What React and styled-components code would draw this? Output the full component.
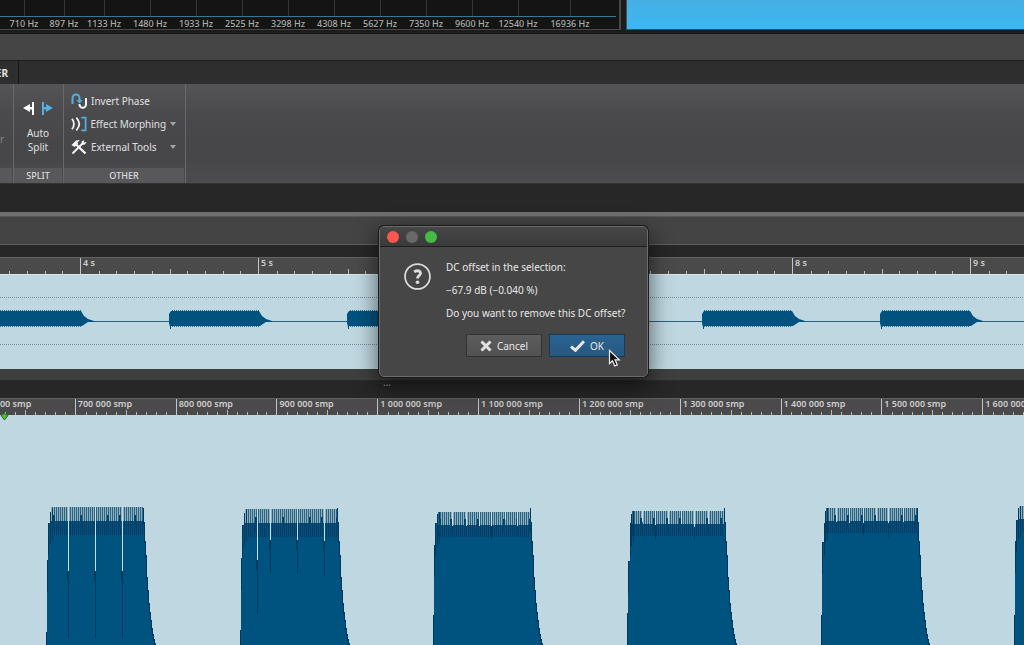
import React from "react";
import styled, { createGlobalStyle } from "styled-components";

const GlobalStyle = createGlobalStyle`
  *, *::before, *::after { box-sizing: border-box; }
  body { margin: 0; background: #272727; }
  button { font: inherit; color: inherit; border: 0; padding: 0; background: none; text-align: left; }
  svg { display: block; }
`;

const FONT = `"Noto Sans", "Open Sans", "Liberation Sans", sans-serif`;

const Page = styled.div`
  position: relative;
  display: flex;
  flex-direction: column;
  min-height: 100vh;
  overflow: hidden;
  background: #272727;
  color: #e0e0e0;
  font-family: ${FONT};
  font-size: 10px;
  line-height: 14px;
`;

/* ---------- meters ---------- */

const MeterRow = styled.div`
  display: flex;
  gap: 5px;
  height: 34px;
  padding-bottom: 3px;
  background: #1c1c1c;
  border-bottom: 1px solid #151515;
`;

const Spectrum = styled.section`
  flex: 0 0 621px;
  display: flex;
  gap: 3px;
  padding-left: 4px;
  background: linear-gradient(#3b7699, #3b7699) 0 16px / 616px 1px no-repeat #141414;
  border: solid #4b4848;
  border-width: 0 2px 1px 0;
`;

const BandGroup = styled.div`
  display: flex;
`;

const Band = styled.div`
  width: ${(p) => p.$width}px;
  display: flex;
  flex-direction: column;
  align-items: center;
  white-space: nowrap;
  color: #adadad;
  font-size: 9px;
  font-weight: 500;
  line-height: 14px;

  &::before {
    content: "";
    width: 1px;
    height: 16px;
    margin-bottom: 1px;
    flex: none;
    background: #363636;
  }
`;

const LevelMeter = styled.div`
  flex: 1;
  background: linear-gradient(#46afe4, #3cb8f2);
  border: solid #4b4b4b;
  border-width: 0 0 1px 1px;
`;

/* ---------- ribbon ---------- */

const Bar = styled.div`
  flex: none;
  height: ${(p) => p.$height}px;
  background: ${(p) => p.$color};
  border-bottom: ${(p) => (p.$edge ? `1px solid ${p.$edge}` : "0")};
`;

const TabBar = styled.nav`
  display: flex;
  height: 23px;
  background: #2e2e2e;
`;

const Tab = styled.button`
  width: 19px;
  display: flex;
  justify-content: flex-end;
  align-items: center;
  padding-right: 10px;
  overflow: hidden;
  border-right: 1px solid #161616;
  color: #e6e6e6;
  font-weight: 700;
`;

const Ribbon = styled.div`
  display: flex;
  height: 100px;
  background: linear-gradient(#555458, #4a4a4c 30%, #464648 70%, #4c4c4e);
  border-bottom: 1px solid #333;
`;

const Group = styled.section`
  width: ${(p) => p.$width}px;
  display: flex;
  flex-direction: column;
  padding-right: 1px;
  border-right: 1px solid #68686a;
`;

const GroupBody = styled.div`
  flex: 1;
  display: flex;
  flex-direction: column;
  padding-top: ${(p) => p.$top}px;
`;

const GroupTitle = styled.h2`
  height: 15px;
  margin: 0;
  background: #58585a;
  color: #dcdcdc;
  font-size: 9px;
  font-weight: 500;
  line-height: 15px;
  text-align: center;
`;

const DisabledLabel = styled.span`
  color: #828284;
`;

const SplitButton = styled.button`
  display: flex;
  flex-direction: column;
  align-items: center;
  gap: 10px;
  text-align: center;
`;

const ToolButton = styled.button`
  display: flex;
  align-items: center;
  gap: 4px;
  height: 23px;
  padding: 0 8px 0 7px;
  white-space: nowrap;

  span { flex: 1; }
`;

/* ---------- rulers and waveforms ---------- */

const Ruler = styled.div`
  flex: none;
  height: 17px;
  overflow: hidden;
  background: #4a4a4a;
  border-top: 1px solid #626262;
`;

const Track = styled.div`
  display: flex;
  width: ${(p) => p.$width}px;
  height: 16px;
  margin-left: ${(p) => p.$start}px;
`;

const Major = styled.div`
  flex: 1 1 0;
  display: grid;
  grid-template-rows: 11px 5px;
  border-left: 1px solid #c4c4c4;
`;

const MajorLabel = styled.span`
  padding-left: 2px;
  color: #cfcfcf;
  font-size: 9px;
  font-weight: 600;
  line-height: 10px;
  white-space: nowrap;
`;

const Minors = styled.div`
  display: flex;
  align-items: flex-end;
`;

const Minor = styled.i`
  flex: 1 1 0;
  height: ${(p) => p.$height}px;
  border-left: 1px solid ${(p) => (p.$height ? "#b9b9b9" : "transparent")};
`;

const Overview = styled.div`
  flex: none;
  height: 95px;
  background: #bfd7e0;
`;

const Detail = styled.div`
  position: relative;
  flex: 1 0 230px;
  background: #bfd7e0;

  > svg:first-child { position: absolute; inset: 0; }
`;

const Marker = styled.svg`
  position: absolute;
  left: 0;
  top: -4px;
`;

const Splitter = styled.div`
  flex: none;
  height: 17px;
  padding-left: 383px;
  background: #272727;
  color: #b0b0b0;
  line-height: 2px;
`;

/* ---------- dialog ---------- */

const Overlay = styled.div`
  position: absolute;
  inset: 0;
  display: flex;
  justify-content: center;
  align-items: flex-start;
  padding: 226px 0 0 3px;
`;

const Dialog = styled.div`
  position: relative;
  width: 269px;
  border: 1px solid #6b6b6b;
  border-radius: 5px;
  background: #464646;
  color: #e6e6e6;
  box-shadow: 0 0 0 1px #1b1b1b, 0 8px 22px 2px rgba(0, 0, 0, 0.55);
`;

const TitleBar = styled.div`
  display: flex;
  align-items: center;
  gap: 7px;
  height: 20px;
  padding-left: 7px;
  border-bottom: 1px solid #1e1e1e;
  border-radius: 4px 4px 0 0;
  background: linear-gradient(#474747, #3a3a3a);
`;

const Light = styled.button`
  width: 12px;
  height: 12px;
  border-radius: 50%;
  background: ${(p) => p.$color};
`;

const DialogBody = styled.div`
  display: flex;
  gap: 15px;
  padding: 9px 0 0 24px;

  > svg { margin-top: 7px; }
`;

const Message = styled.div`
  white-space: nowrap;

  p { margin: 0; line-height: 23px; }
`;

const Actions = styled.div`
  display: flex;
  justify-content: flex-end;
  gap: 7px;
  padding: 9px 22px 19px 0;
`;

const ActionButton = styled.button`
  display: flex;
  align-items: center;
  justify-content: center;
  gap: 5px;
  width: 76px;
  height: 23px;
  border: 1px solid ${(p) => (p.$primary ? "#15395f" : "#333")};
  background: ${(p) => (p.$primary ? "linear-gradient(#2a6391, #27587f)" : "linear-gradient(#5c5c5c, #525252)")};
`;

const Pointer = styled.svg`
  position: absolute;
  left: 228px;
  top: 122px;
`;

/* ---------- data ---------- */

const LOW_BANDS = ["710 Hz", "897 Hz", "1133 Hz"];
const HIGH_BANDS = ["1480 Hz", "1933 Hz", "2525 Hz", "3298 Hz", "4308 Hz", "5627 Hz", "7350 Hz", "9600 Hz", "12540 Hz"];

const SECONDS = ["", "4 s", "5 s", "", "", "8 s", "9 s", "", "", ""];
const SAMPLES = Array.from({ length: 16 }, (_, i) => {
  const n = i + 6;
  if (n > 16) return "";
  return n < 10 ? `${n}00 000 smp` : `${Math.floor(n / 10)} ${n % 10}00 000 smp`;
});

const BODY = "#00527f";
const DARK = "#003a5f";

const BURSTS = [
  { x: 46, left: [[0, 217], [1, 145], [2, 108], [4, 97], [6, 94]], end: 143, top: 92, mid: 106, low: 120,
    slits: [[68, 156, 223], [95, 156, 223], [122, 156, 223]], lumps: [53, 80, 107, 119, 134] },
  { x: 240, left: [[0, 215], [1, 143], [2, 110], [4, 98], [6, 94]], end: 337, top: 94, mid: 108, low: 122,
    slits: [[257, 145, 199], [270, 125, 158], [297, 125, 159], [324, 126, 161]], lumps: [255, 282, 309, 321, 336] },
  { x: 433, left: [[0, 200], [1, 130], [2, 108], [4, 99], [6, 97]], end: 530, top: 97, mid: 110, low: 122,
    slits: [[452, 111, 111], [466, 111, 111], [479, 111, 111], [491, 111, 124], [505, 105, 105], [517, 111, 111]], lumps: [439, 450, 464, 477, 503, 516, 529] },
  { x: 627, left: [[0, 198], [1, 146], [3, 108], [4, 99], [6, 96]], end: 724, top: 96, mid: 109, low: 121,
    slits: [[642, 107, 107], [655, 110, 125], [668, 109, 109], [681, 109, 109], [694, 112, 125], [708, 109, 109]], lumps: [640, 653, 666, 679, 706, 720] },
  { x: 821, left: [[0, 200], [1, 127], [3, 108], [4, 96], [6, 93]], end: 917, top: 93, mid: 106, low: 118,
    slits: [[836, 107, 107], [849, 108, 108], [863, 108, 120], [876, 106, 106], [888, 108, 122], [903, 107, 107]], lumps: [834, 847, 861, 874, 901, 915] },
  { x: 1014, left: [[0, 200], [1, 126], [2, 105], [4, 93], [6, 91]], end: 1111, top: 91, mid: 104, low: 116, slits: [], lumps: [] },
];

const DECAY = [[0, 107], [1, 126], [2, 140], [3, 162], [4, 175], [5, 188], [6, 197], [7, 205], [8, 213], [9, 219], [10, 224], [11, 228], [12, 232]];

function stepPath(points, baseX) {
  return points.map(([dx, y], i) => (i ? `H${baseX + dx}V${y}` : `V${y}`)).join("");
}

function Burst({ data }) {
  const { x, left, end, top, mid, low, slits, lumps } = data;
  const start = x + 6;
  const outline = `M${x} 1000${stepPath(left, x)}V${mid}H${end}${DECAY.map(([d, y]) => `H${end + d}V${y}`).join("")}H${end + 13}V1000Z`;
  const edge = `${DECAY.map(([d, y], i) => `M${end + d} ${y - (i ? y - DECAY[i - 1][1] : 14)}h1V${y + 2}h-1Z`).join("")}${left
    .map(([d, y]) => `M${x + d} ${y}h1v${d ? 32 : 60}h-1Z`)
    .join("")}`;
  return (
    <g shapeRendering="crispEdges">
      <path d={outline} fill={BODY} />
      <rect x={start - 1} y={top} width={end - start + 1} height={mid - top} fill="url(#teeth)" />
      <rect x={start - 2} y={mid} width={end - start + 2} height={low - mid} fill="url(#ridge)" />
      <path d={edge} fill={DARK} />
      {lumps.map((l) => (
        <rect key={l} x={l} y={mid - 6} width="2" height="14" fill="#00466f" />
      ))}
      {slits.map(([sx, lightEnd, darkEnd]) => (
        <g key={sx}>
          <rect x={sx} y={top} width="1" height={lightEnd - top} fill="#c9dce4" />
          <rect x={sx} y={lightEnd} width="1" height={darkEnd - lightEnd} fill={DARK} />
          {darkEnd - lightEnd > 20 && <rect x={sx - 1} y={lightEnd} width="1" height="10" fill={DARK} />}
        </g>
      ))}
    </g>
  );
}

function OverviewWave() {
  return (
    <svg width="100%" height="95" aria-hidden="true">
      <defs>
        <pattern id="dots" width="2" height="1" patternUnits="userSpaceOnUse">
          <rect width="1" height="1" fill="#718f9d" />
        </pattern>
        <pattern id="comb" width="2" height="1" patternUnits="userSpaceOnUse">
          <rect width="1" height="1" fill="#316f90" />
        </pattern>
      </defs>
      <rect width="100%" height="1" fill="#d6e6ec" />
      <rect y="23" width="100%" height="1" fill="url(#dots)" />
      <rect y="70" width="100%" height="1" fill="url(#dots)" />
      <rect y="47" width="100%" height="1" fill="#2d6280" />
      {[-9, 169, 347, 525, 702, 880].map((x) => (
        <g key={x}>
          <path d={`M${x} 40L${x + 2} 37H${x + 90}L${x + 93} 42L${x + 97} 45L${x + 103} 47V48L${x + 97} 48L${x + 91} 52H${x + 2}V55H${x + 1}V53L${x} 49Z`} fill={BODY} />
          <rect x={x + 2} y="36" width="88" height="1" fill="url(#comb)" />
          <rect x={x + 2} y="52" width="88" height="1" fill="url(#comb)" />
        </g>
      ))}
    </svg>
  );
}

function DetailWave() {
  return (
    <svg width="100%" height="100%" aria-hidden="true">
      <defs>
        <pattern id="teeth" width="2" height="1" patternUnits="userSpaceOnUse">
          <rect width="2" height="1" fill="#8fb0c1" />
          <rect width="1" height="1" fill="#2b6383" />
        </pattern>
        <pattern id="ridge" width="2" height="1" patternUnits="userSpaceOnUse">
          <rect width="2" height="1" fill={BODY} />
          <rect width="1" height="1" fill="#003e67" />
        </pattern>
      </defs>
      {BURSTS.map((b) => (
        <Burst key={b.x} data={b} />
      ))}
    </svg>
  );
}

function Scale({ labels, width, start }) {
  return (
    <Ruler>
      <Track $width={width} $start={start}>
        {labels.map((label, n) => (
          <Major key={n}>
            <MajorLabel>{label}</MajorLabel>
            <Minors>
              {[0, 3, 3, 3, 3, 5, 3, 3, 3, 3].map((h, i) => (
                <Minor key={i} $height={h} />
              ))}
            </Minors>
          </Major>
        ))}
      </Track>
    </Ruler>
  );
}

const Caret = () => (
  <svg width="6" height="4" aria-hidden="true">
    <path d="M0 0h6L3 4z" fill="#a5a5a7" />
  </svg>
);

export default function App() {
  return (
    <Page>
      <GlobalStyle />
      <MeterRow>
        <Spectrum aria-label="Spectrum">
          <BandGroup>
            {LOW_BANDS.map((b) => (
              <Band key={b} $width={40}>{b}</Band>
            ))}
          </BandGroup>
          <BandGroup>
            {HIGH_BANDS.map((b) => (
              <Band key={b} $width={46}>{b}</Band>
            ))}
            <Band $width={58}>16936 Hz</Band>
          </BandGroup>
        </Spectrum>
        <LevelMeter />
      </MeterRow>

      <Bar $height={27} $color="#454545" $edge="#1c1c1c" />
      <TabBar>
        <Tab>ER</Tab>
      </TabBar>
      <Ribbon>
        <Group $width={14}>
          <GroupBody $top={48}>
            <DisabledLabel>r</DisabledLabel>
          </GroupBody>
          <GroupTitle />
        </Group>
        <Group $width={50}>
          <GroupBody $top={16}>
            <SplitButton>
              <svg width="32" height="16" viewBox="0 0 32 16" aria-hidden="true">
                <path d="M1 8l7-4v3h2V2h2v13h-2V9.500H8V12z" fill="#fff" />
                <path d="M31 8l-7-4v3h-2V2h-2v13h2V9.500h2V12z" fill="#55aee0" />
              </svg>
              <span>Auto<br />Split</span>
            </SplitButton>
          </GroupBody>
          <GroupTitle>SPLIT</GroupTitle>
        </Group>
        <Group $width={122}>
          <GroupBody $top={5}>
            <ToolButton>
              <svg width="16" height="16" viewBox="0 0 16 16" fill="none" strokeWidth="2" aria-hidden="true">
                <path d="M1.500 11V5a3.500 3.500 0 0 1 7 0v2" stroke="#55aee0" />
                <path d="M5.500 7h6L8.500 10.500z" fill="#55aee0" />
                <path d="M8.500 11v0.500a3.200 3.200 0 0 0 6.500 0V5" stroke="#f4f4f4" />
              </svg>
              <span>Invert Phase</span>
            </ToolButton>
            <ToolButton>
              <svg width="16" height="16" viewBox="0 0 16 16" fill="none" strokeWidth="1.800" aria-hidden="true">
                <path d="M1 2.500q4 5.500 0 11M5.500 1.500q6 6.500 0 13" stroke="#f4f4f4" />
                <path d="M10.500 1.500H15v13h-4.500" stroke="#55aee0" />
              </svg>
              <span>Effect Morphing</span>
              <Caret />
            </ToolButton>
            <ToolButton>
              <svg width="16" height="16" viewBox="0 0 16 16" aria-hidden="true">
                <path d="M1.500 14.500L12.500 3.500" stroke="#f4f4f4" strokeWidth="2" />
                <path d="M4 4.500L14.500 14.500" stroke="#f4f4f4" strokeWidth="2.400" />
                <path d="M0.500 6L5 1.500 9 1 6.500 3.500 7 5 3.500 8z" fill="#f4f4f4" />
                <path d="M10.500 2.500L13 1v2.500l2.500-0.500L14 5.500l-3 0.500z" fill="#f4f4f4" />
              </svg>
              <span>External Tools</span>
              <Caret />
            </ToolButton>
          </GroupBody>
          <GroupTitle>OTHER</GroupTitle>
        </Group>
      </Ribbon>

      <Bar $height={28} $color="#272727" />
      <Bar $height={5} $color="#6f6f6f" $edge="#575757" />
      <Bar $height={28} $color="#444" $edge="#5e5e5e" />
      <Bar $height={12} $color="#272727" />
      <Scale labels={SECONDS} width={1780} start={-98} />
      <Overview>
        <OverviewWave />
      </Overview>
      <Bar $height={12} $color="#3f3f3f" $edge="#2a2a2a" />
      <Splitter>...</Splitter>
      <Scale labels={SAMPLES} width={1613} start={-26} />
      <Detail>
        <DetailWave />
        <Marker width="9" height="10" viewBox="0 0 9 10" aria-hidden="true">
          <path d="M4.500 0.500V3M1 4.500L4.500 2.500 8 4.500 4.500 9z" fill="#4fb83f" stroke="#2b6b25" />
        </Marker>
      </Detail>

      <Overlay>
        <Dialog role="dialog" aria-label="DC offset">
          <TitleBar>
            <Light $color="#fb574f" aria-label="Close" />
            <Light $color="#686868" aria-label="Minimize" />
            <Light $color="#45bb45" aria-label="Zoom" />
          </TitleBar>
          <DialogBody>
            <svg width="27" height="27" viewBox="0 0 28 28" fill="none" stroke="#dcdcdc" aria-hidden="true">
              <circle cx="14" cy="14" r="12.900" strokeWidth="1.800" />
              <path d="M10.500 9.200q3.200-2 5.600-0.600 2.200 2-0.300 4.200-1.800 1.300-1.800 3.400" strokeWidth="3" />
              <circle cx="14" cy="20" r="1.900" fill="#dcdcdc" stroke="none" />
            </svg>
            <Message>
              <p>DC offset in the selection:</p>
              <p>−67.9 dB (−0.040 %)</p>
              <p>Do you want to remove this DC offset?</p>
            </Message>
          </DialogBody>
          <Actions>
            <ActionButton>
              <svg width="12" height="12" viewBox="0 0 12 12" aria-hidden="true">
                <path d="M1.500 1.500l9 9M10.500 1.500l-9 9" stroke="#e2e2e2" strokeWidth="3" />
              </svg>
              Cancel
            </ActionButton>
            <ActionButton $primary>
              <svg width="15" height="12" viewBox="0 0 15 12" aria-hidden="true">
                <path d="M1 6.500l4.500 3.800L14 1.200" fill="none" stroke="#e8e8e8" strokeWidth="3" />
              </svg>
              OK
            </ActionButton>
          </Actions>
          <Pointer width="13" height="19" viewBox="0 0 13 19" aria-hidden="true">
            <path d="M1.500 1.500v13l3-2.800 2.200 5.300 2.600-1.100-2.200-5.100h4.200z" fill="#111" stroke="#eee" strokeWidth="1.200" />
          </Pointer>
        </Dialog>
      </Overlay>
    </Page>
  );
}
